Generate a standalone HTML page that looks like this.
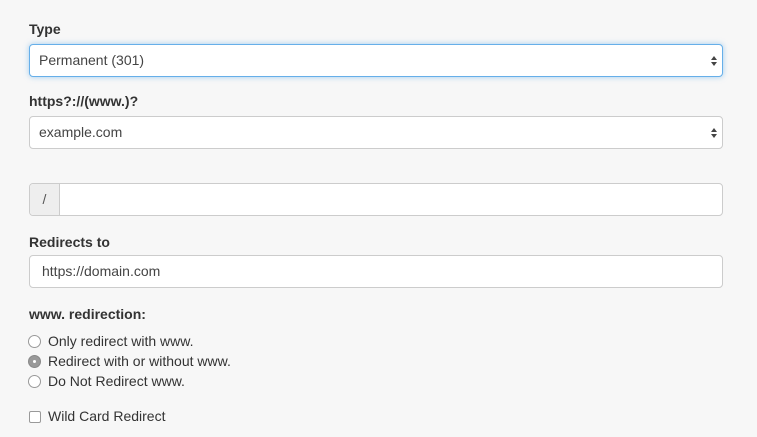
<!DOCTYPE html>
<html><head><style>
body{margin:0;background:#f7f7f7;font-family:"Liberation Sans",Arial,sans-serif;font-size:14px;color:#333;width:757px;height:437px;overflow:hidden;position:relative}
.l{position:absolute;left:29px;font-weight:bold;font-size:14px;color:#333}
.b{position:absolute;left:29px;width:694px;height:33px;box-sizing:border-box;border:1px solid #ccc;border-radius:4px;background:#fff;color:#444;font-size:14px;line-height:31px;padding-left:9px}
.f{border-color:#66afe9;box-shadow:0 0 6px rgba(102,175,233,.6)}
.ar{position:absolute;right:4px;top:10px;width:8px;height:12px}
.r{position:absolute;left:28px;font-size:14px;color:#333}
.c{display:inline-block;width:13px;height:13px;border:1px solid #999;border-radius:50%;background:#fff;vertical-align:-2px;margin-right:7px;box-sizing:border-box}
</style></head><body>
<div class="l" style="top:21px">Type</div>
<div class="b f" style="top:44px">Permanent (301)<svg class="ar" viewBox="0 0 8 12"><path d="M4 1L7 5H1Z M4 11L7 7H1Z" fill="#444"/></svg></div>
<div class="l" style="top:93px">https?://(www.)?</div>
<div class="b" style="top:116px">example.com<svg class="ar" viewBox="0 0 8 12"><path d="M4 1L7 5H1Z M4 11L7 7H1Z" fill="#444"/></svg></div>
<div class="b" style="top:183px;padding:0"><div style="position:absolute;left:0;top:0;width:29px;height:31px;background:#eee;border-right:1px solid #ccc;border-radius:4px 0 0 4px;text-align:center;color:#555">/</div></div>
<div class="l" style="top:234px">Redirects to</div>
<div class="b" style="top:255px;padding-left:12px">https://domain.com</div>
<div class="l" style="top:306px">www. redirection:</div>
<div class="r" style="top:333px"><span class="c"></span>Only redirect with www.</div>
<div class="r" style="top:353px"><span class="c" style="background:#999;border-color:#888;position:relative"><span style="position:absolute;left:4px;top:4px;width:3px;height:3px;border-radius:50%;background:#fff"></span></span>Redirect with or without www.</div>
<div class="r" style="top:373px"><span class="c"></span>Do Not Redirect www.</div>
<div class="r" style="top:408px;left:29px"><span class="c" style="border-radius:2px;width:12px;height:12px;margin-right:7px"></span>Wild Card Redirect</div>
</body></html>
